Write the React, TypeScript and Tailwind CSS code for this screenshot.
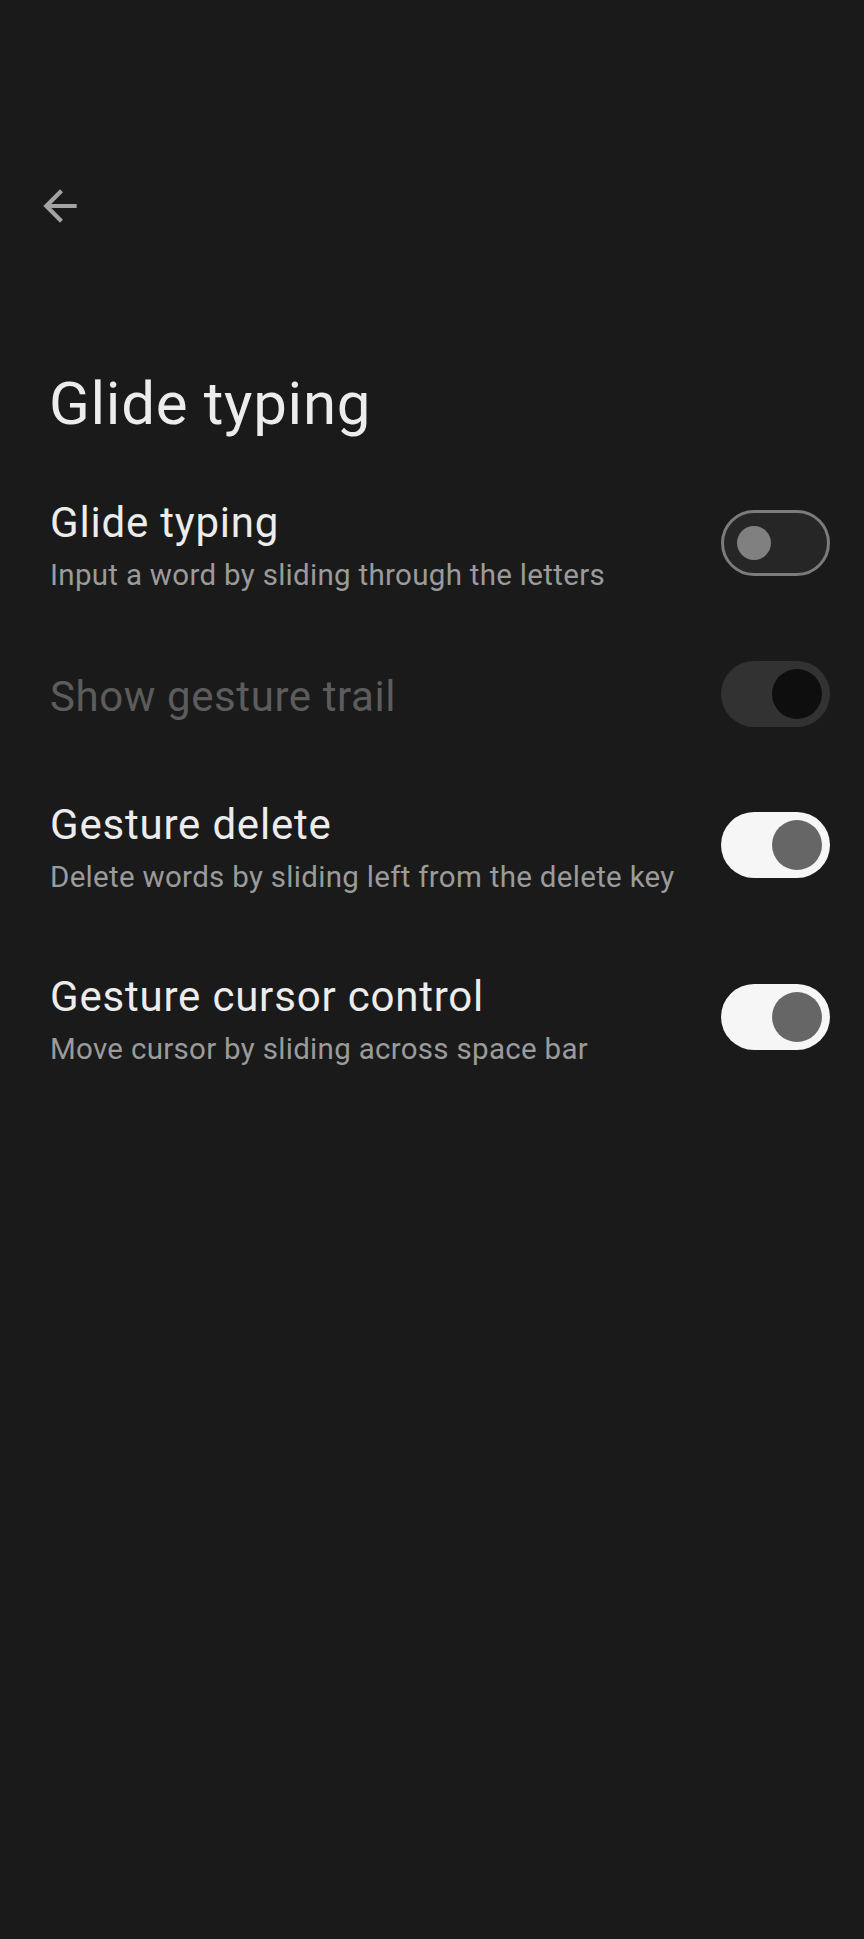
import React from 'react';

interface SettingRowProps {
  title: string;
  summary?: string;
  state: 'off' | 'disabled' | 'on';
}

const Toggle: React.FC<{ state: SettingRowProps['state'] }> = ({ state }) => {
  if (state === 'off') {
    return (
      <div className="flex h-[66px] w-[109px] shrink-0 items-center rounded-full border-[3px] border-[#7b7b7b] bg-[#262626] pl-[13px]">
        <div className="h-[34px] w-[34px] rounded-full bg-[#808080]" />
      </div>
    );
  }
  if (state === 'disabled') {
    return (
      <div className="flex h-[66px] w-[109px] shrink-0 items-center justify-end rounded-full bg-[#323232] pr-[8px]">
        <div className="h-[50px] w-[50px] rounded-full bg-[#0e0e0e]" />
      </div>
    );
  }
  return (
    <div className="flex h-[66px] w-[109px] shrink-0 items-center justify-end rounded-full bg-[#f6f6f6] pr-[8px]">
      <div className="h-[50px] w-[50px] rounded-full bg-[#666666]" />
    </div>
  );
};

const SettingRow: React.FC<SettingRowProps> = ({ title, summary, state }) => {
  const disabled = state === 'disabled';
  return (
    <div
      className={
        summary
          ? 'flex items-center justify-between py-[34.5px] pl-[50px] pr-[34px]'
          : 'flex min-h-[130px] items-center justify-between pl-[50px] pr-[34px]'
      }
    >
      <div className="flex flex-col pt-[5px]">
        <span
          className={
            disabled
              ? 'text-[42px] leading-[52px] tracking-[0.6px] text-[#5c5c5c]'
              : 'text-[42px] leading-[52px] tracking-[0.8px] text-[#ececec]'
          }
        >
          {title}
        </span>
        {summary && (
          <span className="mt-[6px] text-[29.5px] leading-[40px] tracking-[0.3px] text-[#9b9b9b]">{summary}</span>
        )}
      </div>
      <Toggle state={state} />
    </div>
  );
};

export default function App() {
  return (
    <div className="min-h-[1939px] w-full bg-[#1a1a1a] font-['Roboto',sans-serif]">
      <div className="pl-[35px] pt-[181px]">
        <svg width="50" height="50" viewBox="0 0 24 24" fill="#a3a3a3">
          <path d="M20 11H7.83l5.59-5.59L12 4l-8 8 8 8 1.41-1.41L7.83 13H20v-2z" />
        </svg>
      </div>
      <h1 className="mt-[137px] pl-[49px] text-[60px] font-normal leading-[72px] tracking-[0.7px] text-[#ececec]">
        Glide typing
      </h1>
      <div className="mt-[17px] flex flex-col">
        <SettingRow title="Glide typing" summary="Input a word by sliding through the letters" state="off" />
        <SettingRow title="Show gesture trail" state="disabled" />
        <SettingRow title="Gesture delete" summary="Delete words by sliding left from the delete key" state="on" />
        <SettingRow title="Gesture cursor control" summary="Move cursor by sliding across space bar" state="on" />
      </div>
    </div>
  );
}
